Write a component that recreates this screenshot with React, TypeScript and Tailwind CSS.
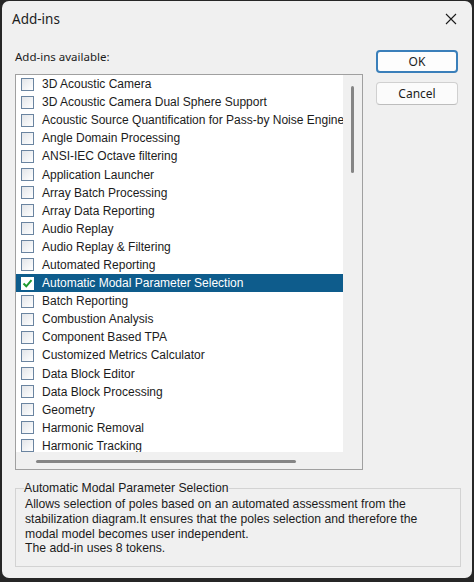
const items = [
  '3D Acoustic Camera',
  '3D Acoustic Camera Dual Sphere Support',
  'Acoustic Source Quantification for Pass-by Noise Engineering',
  'Angle Domain Processing',
  'ANSI-IEC Octave filtering',
  'Application Launcher',
  'Array Batch Processing',
  'Array Data Reporting',
  'Audio Replay',
  'Audio Replay & Filtering',
  'Automated Reporting',
  'Automatic Modal Parameter Selection',
  'Batch Reporting',
  'Combustion Analysis',
  'Component Based TPA',
  'Customized Metrics Calculator',
  'Data Block Editor',
  'Data Block Processing',
  'Geometry',
  'Harmonic Removal',
  'Harmonic Tracking',
];

const selected = 'Automatic Modal Parameter Selection';

function CheckBox({ checked }: { checked: boolean }) {
  if (checked) {
    return (
      <div className="w-[13px] h-[13px] shrink-0 bg-white border border-white flex items-center justify-center">
        <svg width="11" height="11" viewBox="0 0 11 11">
          <polyline points="1.5,5.5 4.3,8.3 9.5,2.2" fill="none" stroke="#1e9a2e" strokeWidth="2" />
        </svg>
      </div>
    );
  }
  return (
    <div className="w-[13px] h-[13px] shrink-0 border border-[#6a84a0] bg-linear-to-br from-[#e2e5e9] to-white" />
  );
}

export default function App() {
  return (
    <div className="w-[474px] h-[582px] bg-[#262626] px-[2px] pt-[1px] pb-[4px]">
      <div
        className="h-full rounded-[7px] bg-[#f0f0f0] flex flex-col text-[#1b1b1b]"
        style={{ fontFamily: '"Noto Sans", "Open Sans", sans-serif' }}
      >
        <div className="h-[36px] shrink-0 flex items-center justify-between pl-[10px] pr-[12px]">
          <span className="text-[13.5px] leading-5">Add-ins</span>
          <svg width="12" height="12" viewBox="0 0 12 12" className="mr-[3px]">
            <path d="M1 1 L11 11 M11 1 L1 11" stroke="#1b1b1b" strokeWidth="1.1" />
          </svg>
        </div>

        <div className="flex pl-[13px] gap-[13px]">
          <div className="w-[348px] shrink-0 flex flex-col">
            <div className="mt-[12px] mb-[9px] h-4 text-[11.5px] leading-4">Add-ins available:</div>
            <div
              className="h-[396px] border border-[#a0a0a0] bg-[#f0f0f0] flex flex-col"
              style={{ fontFamily: '"Liberation Sans", Arial, sans-serif' }}
            >
              <div className="flex h-[377px]">
                <div className="w-[327px] bg-white overflow-hidden">
                  {items.map((name) => {
                    const isSel = name === selected;
                    return (
                      <div
                        key={name}
                        className={`h-[18.1px] flex items-center gap-[8px] pl-[5px] whitespace-nowrap text-[12px] ${
                          isSel ? 'bg-[#0e5c8c] text-white' : 'text-[#1b1b1b]'
                        }`}
                      >
                        <CheckBox checked={isSel} />
                        <span>{name}</span>
                      </div>
                    );
                  })}
                </div>
                <div className="flex-1 flex justify-center pt-[11px]">
                  <div className="w-[3px] h-[87px] rounded-full bg-[#858585]" />
                </div>
              </div>
              <div className="flex-1 flex items-center pl-[20px] pt-[1px]">
                <div className="w-[260px] h-[3px] rounded-full bg-[#858585]" />
              </div>
            </div>
          </div>

          <div className="w-[82px] shrink-0 flex flex-col gap-[9px] pt-[13px] text-[12px]">
            <button className="h-[23px] rounded-[4px] bg-[#fdfdfd] border-2 border-[#3a7fba] flex items-center justify-center leading-4">
              OK
            </button>
            <button className="h-[23px] rounded-[4px] bg-[#fbfbfb] border border-[#d0d0d0] border-b-[#bdbdbd] flex items-center justify-center leading-4">
              Cancel
            </button>
          </div>
        </div>

        <fieldset
          className="ml-[13px] w-[446px] mt-[11px] border border-[#d3d3d3] px-[9px] pb-[10px] text-[12.2px] leading-[14.8px] text-[#1b1b1b]"
          style={{ fontFamily: '"Liberation Sans", Arial, sans-serif' }}
        >
          <legend className="px-0 leading-[15px] -ml-[1px]">Automatic Modal Parameter Selection</legend>
          <div className="whitespace-nowrap pt-[1px]">
            Allows selection of poles based on an automated assessment from the
            <br />
            stabilization diagram.It ensures that the poles selection and therefore the
            <br />
            modal model becomes user independent.
            <br />
            The add-in uses 8 tokens.
          </div>
        </fieldset>
      </div>
    </div>
  );
}
